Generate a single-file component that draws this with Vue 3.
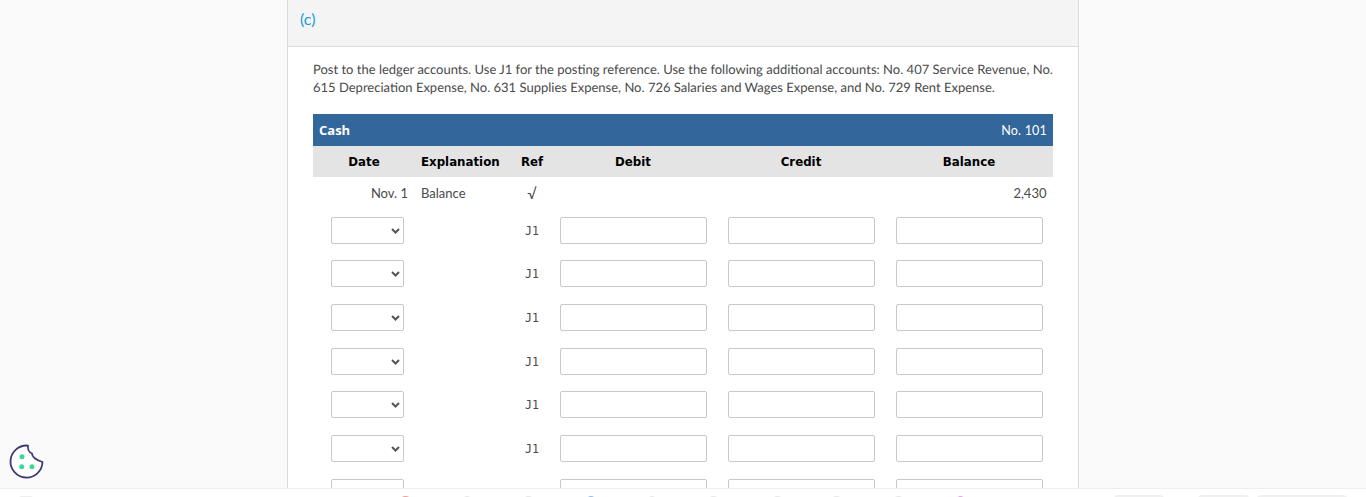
<template>
  <div class="page">
    <div class="panel">
      <div class="panel-head">(c)</div>
      <div class="panel-body">
        <p class="intro">
          Post to the ledger accounts. Use J1 for the posting reference. Use the following additional accounts: No. 407 Service Revenue, No. 615 Depreciation Expense, No. 631 Supplies Expense, No. 726 Salaries and Wages Expense, and No. 729 Rent Expense.
        </p>
        <div class="ledger">
          <div class="title-bar">
            <span class="acct-name">Cash</span>
            <span class="acct-no">No. 101</span>
          </div>
          <div class="row head-row">
            <span>Date</span>
            <span class="left">Explanation</span>
            <span>Ref</span>
            <span>Debit</span>
            <span>Credit</span>
            <span>Balance</span>
          </div>
          <div class="row open-row">
            <span class="right date-cell">Nov. 1</span>
            <span class="left">Balance</span>
            <span class="tick">√</span>
            <span></span>
            <span></span>
            <span class="right balance-cell">2,430</span>
          </div>
          <div v-for="n in rows" :key="n" class="row entry-row">
            <div class="select-cell">
              <select class="date-select"><option></option></select>
            </div>
            <span></span>
            <span class="ref">J1</span>
            <div class="input-cell"><input type="text" /></div>
            <div class="input-cell"><input type="text" /></div>
            <div class="input-cell"><input type="text" /></div>
          </div>
        </div>
      </div>
    </div>

    <button class="cookie-btn" aria-label="Cookie settings">
      <svg width="36" height="36" viewBox="0 0 36 36">
        <path d="M19 1.6 C18.5 5 20 8.5 23 9.5 C23 13 26 15.5 33.5 18 A16 16 0 1 1 19 1.6 Z" fill="#fff" stroke="#3d3a78" stroke-width="1.8" stroke-linejoin="round" />
        <circle cx="13" cy="12.7" r="2.5" fill="#3ed79b" />
        <circle cx="12.7" cy="22.7" r="2.5" fill="#3ed79b" />
        <circle cx="23" cy="22.7" r="2.5" fill="#3ed79b" />
      </svg>
    </button>

    <div class="bottom-bar">
      <span
        v-for="b in bits"
        :key="b.x"
        class="bit"
        :style="{ left: b.x + 'px', width: b.w + 'px', top: b.top + 'px', background: b.c }"
      ></span>
    </div>
  </div>
</template>

<script setup>
const rows = 7

// tops of the toolbar buttons, only the first pixels show above the fold
const bits = [
  { x: 17, w: 18, top: 7, c: '#eeeeee' },
  { x: 400, w: 11, top: 7, c: '#f2a09a' },
  { x: 462, w: 10, top: 7, c: '#e8e8e8' },
  { x: 523, w: 11, top: 7, c: '#e8e8e8' },
  { x: 586, w: 10, top: 7, c: '#93b9ee' },
  { x: 647, w: 10, top: 7, c: '#e8e8e8' },
  { x: 708, w: 11, top: 7, c: '#e8e8e8' },
  { x: 772, w: 11, top: 7, c: '#e8e8e8' },
  { x: 831, w: 11, top: 7, c: '#e8e8e8' },
  { x: 893, w: 11, top: 7, c: '#e8e8e8' },
  { x: 956, w: 9, top: 7, c: '#e3a3e8' },
  { x: 1113, w: 52, top: 6, c: '#f0f0f0' },
  { x: 1197, w: 53, top: 6, c: '#f0f0f0' },
  { x: 1256, w: 92, top: 6, c: '#f0f0f0' }
]
</script>

<style>
html, body {
  margin: 0;
  background: #fafafa;
}
</style>

<style scoped>
.page {
  position: relative;
  height: 497px;
  overflow: hidden;
  background: #fafafa;
  font-family: Lato, "Liberation Sans", sans-serif;
  color: #494949;
}

.panel {
  width: 790px;
  margin-left: 287px;
  background: #fff;
  border-left: 1px solid #dcdcdc;
  border-right: 1px solid #dcdcdc;
}

.panel-head {
  height: 47px;
  box-sizing: border-box;
  padding: 10px 12px;
  background: #f4f4f4;
  border-bottom: 1px solid #dcdcdc;
  color: #1a9be0;
  font-size: 16px;
  line-height: 18px;
}

.panel-body {
  padding: 13px 25px 0;
}

.intro {
  margin: 0 0 18px;
  font-size: 13px;
  line-height: 18px;
  color: #4a4a4a;
  text-rendering: geometricPrecision;
}

.ledger {
  width: 740px;
}

.title-bar {
  display: flex;
  justify-content: space-between;
  align-items: center;
  height: 32px;
  padding: 0 6px;
  background: #33669a;
  color: #fff;
}

.acct-name {
  font-family: "Open Sans", sans-serif;
  font-size: 13px;
  font-weight: 700;
}

.acct-no {
  font-size: 12.5px;
  letter-spacing: 0.2px;
}

.row {
  display: grid;
  grid-template-columns: 102px 100px 34px 168px 168px 168px;
  align-items: center;
  text-align: center;
}

.head-row {
  height: 31px;
  background: #e4e4e4;
  color: #000;
  font-family: "DejaVu Sans", sans-serif;
  font-size: 11.8px;
  font-weight: 700;
}

.open-row {
  height: 31.27px;
  font-size: 13px;
  color: #4a4a4a;
}

.left {
  text-align: left;
  padding-left: 6px;
}

.right {
  text-align: right;
  padding-right: 6px;
}

.date-cell {
  padding-right: 7px;
}

.balance-cell {
  padding-right: 6.5px;
}

.tick {
  font-size: 15px;
}

.entry-row {
  height: 43.67px;
}

.select-cell {
  padding-left: 18px;
  text-align: left;
}

.date-select {
  display: block;
  width: 73px;
  height: 27px;
  box-sizing: border-box;
  appearance: none;
  background-color: #fff;
  background-image: url("data:image/svg+xml,%3Csvg xmlns='http://www.w3.org/2000/svg' width='9' height='6'%3E%3Cpath d='M1 1l3.5 3.5L8 1' fill='none' stroke='%23555' stroke-width='2'/%3E%3C/svg%3E");
  background-repeat: no-repeat;
  background-position: 59px 10px;
  border: 1px solid #c8c8c8;
  border-radius: 2px;
  font-size: 13px;
}

.ref {
  padding-top: 1px;
  font-family: "DejaVu Sans Mono", monospace;
  font-size: 11.5px;
  color: #4a4a4a;
}

.input-cell {
  padding-left: 11px;
}

.input-cell input {
  display: block;
  width: 147px;
  height: 27px;
  box-sizing: border-box;
  padding: 0 6px;
  background: #fff;
  border: 1px solid #c8c8c8;
  border-radius: 2px;
}

.cookie-btn {
  position: absolute;
  left: 9px;
  top: 444px;
  width: 36px;
  height: 36px;
  padding: 0;
  border: 0;
  background: transparent;
}

.cookie-btn svg {
  display: block;
}

.bottom-bar {
  position: absolute;
  left: 0;
  right: 0;
  bottom: 0;
  height: 9px;
  box-sizing: border-box;
  background: #fff;
  border-top: 1px solid #eeeeee;
}

.bit {
  position: absolute;
  height: 8px;
  border-radius: 5px 5px 0 0;
}
</style>
